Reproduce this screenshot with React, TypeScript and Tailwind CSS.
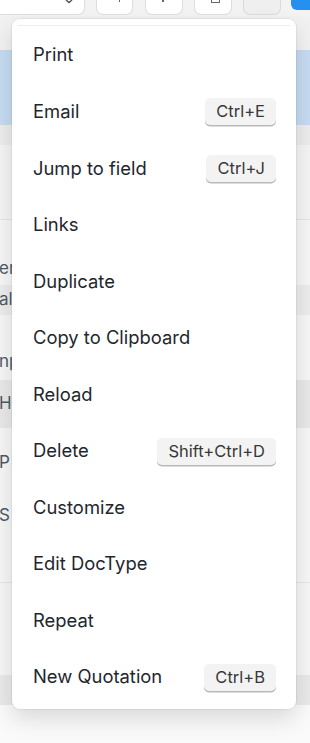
import React from "react";

const items: { label: string; kbd?: string }[] = [
  { label: "Print" },
  { label: "Email", kbd: "Ctrl+E" },
  { label: "Jump to field", kbd: "Ctrl+J" },
  { label: "Links" },
  { label: "Duplicate" },
  { label: "Copy to Clipboard" },
  { label: "Reload" },
  { label: "Delete", kbd: "Shift+Ctrl+D" },
  { label: "Customize" },
  { label: "Edit DocType" },
  { label: "Repeat" },
  { label: "New Quotation", kbd: "Ctrl+B" },
];

function Frag({ text }: { text: string }) {
  return (
    <div className="h-full flex items-center pl-[0px]">
      <span className="whitespace-nowrap text-[17px] text-[#4c5a67] ml-[-1px]">{text}</span>
    </div>
  );
}

export default function App() {
  return (
    <div
      className="relative w-[310px] h-[743px] overflow-hidden bg-[#f6f6f6]"
      style={{ fontFamily: "Inter, 'Noto Sans', sans-serif" }}
    >
      {/* background page */}
      <div className="flex flex-col">
        <div className="h-[16px] relative flex bg-[#f3f3f3]">
          <div className="h-[15px] w-[101px] ml-[-10px] bg-white border border-t-0 border-[#dedede] rounded-b-[7px] relative">
            <svg className="absolute left-[73px] top-0" width="10" height="4" viewBox="0 0 10 4">
              <path d="M2 0 L5 2.5 L8 0" stroke="#555" strokeWidth="1.4" fill="none" />
            </svg>
          </div>
          <div className="h-[15px] w-[40px] ml-[11px] bg-white border border-t-0 border-[#dedede] rounded-b-[7px] relative">
            <div className="absolute left-[22px] top-0 w-[1.5px] h-[2px] bg-[#666]" />
          </div>
          <div className="h-[15px] w-[40px] ml-[12px] bg-white border border-t-0 border-[#dedede] rounded-b-[7px] relative">
            <div className="absolute left-[16px] top-0 w-[1.5px] h-[2px] bg-[#666]" />
          </div>
          <div className="h-[15px] w-[40px] ml-[11px] bg-white border border-t-0 border-[#dedede] rounded-b-[7px] relative">
            <div className="absolute left-[16px] top-0 w-[9px] h-[3px] border-b-[1.5px] border-x-[1.5px] border-[#666] rounded-b-[1px]" />
          </div>
          <div className="h-[15px] w-[41px] ml-[11px] bg-[#efefef] border border-t-0 border-[#dadada] rounded-b-[7px]" />
          <div className="h-[10px] w-[20px] ml-[10px] bg-[#2490ef] rounded-bl-[6px]" />
        </div>
        <div className="h-[34px] bg-[#f1f1f1]" />
        <div className="h-[75px] bg-[#c6dbf1]" />
        <div className="h-[20px] bg-[#ececec]" />
        <div className="h-[75px] bg-[#f4f4f4] border-b border-[#e4e4e4]" />
        <div className="h-[65px] bg-[#f6f6f6] flex items-end pb-[4px]">
          <div className="h-[24px]">
            <Frag text="er" />
          </div>
        </div>
        <div className="h-[30px] bg-[#ececec]">
          <Frag text="al" />
        </div>
        <div className="h-[65px] bg-[#f6f6f6] flex items-end pb-[6px]">
          <div className="h-[24px]">
            <Frag text="np" />
          </div>
        </div>
        <div className="h-[48px] bg-[#e8e8e9]">
          <Frag text="H" />
        </div>
        <div className="h-[155px] bg-[#f6f6f6] border-b border-[#e6e6e6] flex flex-col">
          <div className="h-[70px] flex items-center">
            <Frag text="P" />
          </div>
          <div className="h-[36px] flex items-center">
            <Frag text="S" />
          </div>
        </div>
        <div className="h-[92px] bg-[#f6f6f6]" />
        <div className="h-[30px] bg-[#e9e9ea]" />
        <div className="h-[40px] bg-[#fafafa]" />
      </div>

      {/* dropdown menu */}
      <div className="absolute left-[12px] top-[19px] w-[284px] bg-white rounded-[8px] pt-[8px] pb-[3px] shadow-[0_0_0_1px_rgba(0,0,0,0.05),0_10px_22px_rgba(0,0,0,0.13)]">
        <div className="absolute left-[6px] right-[6px] top-[6px] h-px bg-[#ededed]" />
        {items.map((it) => (
          <div key={it.label} className="h-[56.55px] flex items-center justify-between pl-[21px] pr-[20px]">
            <span className="text-[18.4px] text-[#1f272e]">{it.label}</span>
            {it.kbd && (
              <span className="h-[27px] px-[11px] flex items-center rounded-[5px] bg-[#f3f3f3] text-[16.5px] text-[#383838] shadow-[0_1.5px_0_#b9b9b9]">
                {it.kbd}
              </span>
            )}
          </div>
        ))}
      </div>
    </div>
  );
}
